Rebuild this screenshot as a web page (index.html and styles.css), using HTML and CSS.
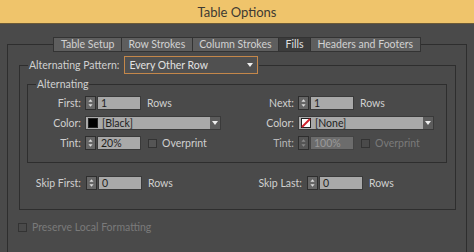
FILE: index.html
```html
<!DOCTYPE html>
<html lang="en">
<head>
    <meta charset="UTF-8">
    <meta name="viewport" content="width=device-width, initial-scale=1.0">
    <title>Table Options</title>
    <link rel="stylesheet" href="styles.css">
</head>
<body>
    <div class="titlebar">Table Options</div>

    <div class="panel">
        <div class="tabs">
            <span class="tab">Table Setup</span>
            <span class="tab">Row Strokes</span>
            <span class="tab">Column Strokes</span>
            <span class="tab active">Fills</span>
            <span class="tab">Headers and Footers</span>
        </div>

        <fieldset class="group pattern">
            <legend>
                <span class="legend-label">Alternating Pattern:</span>
                <span class="select">Every Other Row<span class="caret"></span></span>
            </legend>

            <fieldset class="group alternating">
                <legend>Alternating</legend>
                <div class="row">
                    <div class="cell first-col">
                        <span class="label">First:</span>
                        <svg class="spin" viewBox="0 0 11 14"><path d="M3 5.5 L5.5 2.5 L8 5.5Z"/><path d="M3 8.5 L5.5 11.5 L8 8.5Z"/></svg>
                        <span class="num">1</span>
                        <span class="unit">Rows</span>
                    </div>
                    <div class="cell">
                        <span class="label">Next:</span>
                        <svg class="spin" viewBox="0 0 11 14"><path d="M3 5.5 L5.5 2.5 L8 5.5Z"/><path d="M3 8.5 L5.5 11.5 L8 8.5Z"/></svg>
                        <span class="num">1</span>
                        <span class="unit">Rows</span>
                    </div>
                </div>
                <div class="row">
                    <div class="cell first-col">
                        <span class="label">Color:</span>
                        <span class="color-select">
                            <span class="swatch black"></span>
                            <span class="color-name">[Black]</span>
                            <span class="drop"></span>
                        </span>
                    </div>
                    <div class="cell">
                        <span class="label">Color:</span>
                        <span class="color-select">
                            <svg class="swatch" viewBox="0 0 10 10"><rect x="0.5" y="0.5" width="9" height="9" fill="#fff" stroke="#222"/><path d="M1 9 L9 1" stroke="#d0202a" stroke-width="2"/></svg>
                            <span class="color-name">[None]</span>
                            <span class="drop"></span>
                        </span>
                    </div>
                </div>
                <div class="row">
                    <div class="cell first-col">
                        <span class="label">Tint:</span>
                        <svg class="spin" viewBox="0 0 11 14"><path d="M3 5.5 L5.5 2.5 L8 5.5Z"/><path d="M3 8.5 L5.5 11.5 L8 8.5Z"/></svg>
                        <span class="num">20%</span>
                        <span class="check"></span>
                        <span class="check-label">Overprint</span>
                    </div>
                    <div class="cell disabled">
                        <span class="label">Tint:</span>
                        <svg class="spin" viewBox="0 0 11 14"><path d="M3 5.5 L5.5 2.5 L8 5.5Z"/><path d="M3 8.5 L5.5 11.5 L8 8.5Z"/></svg>
                        <span class="num">100%</span>
                        <span class="check"></span>
                        <span class="check-label">Overprint</span>
                    </div>
                </div>
            </fieldset>

            <div class="row skip">
                <div class="cell first-col">
                    <span class="label">Skip First:</span>
                    <svg class="spin" viewBox="0 0 11 14"><path d="M3 5.5 L5.5 2.5 L8 5.5Z"/><path d="M3 8.5 L5.5 11.5 L8 8.5Z"/></svg>
                    <span class="num">0</span>
                    <span class="unit">Rows</span>
                </div>
                <div class="cell">
                    <span class="label">Skip Last:</span>
                    <svg class="spin" viewBox="0 0 11 14"><path d="M3 5.5 L5.5 2.5 L8 5.5Z"/><path d="M3 8.5 L5.5 11.5 L8 8.5Z"/></svg>
                    <span class="num">0</span>
                    <span class="unit">Rows</span>
                </div>
            </div>
        </fieldset>

        <div class="preserve disabled">
            <span class="check"></span>
            <span class="check-label">Preserve Local Formatting</span>
        </div>
    </div>
</body>
</html>
```

FILE: styles.css
```css
body {
    font-family: Lato, "Noto Sans", sans-serif;
    font-size: 10.5px;
    margin: 0;
    padding: 0;
    height: 252px;
    overflow: hidden;
    background-color: #4a4a4a;
    color: #d0d0d0;
}
.titlebar {
    height: 23px;
    line-height: 24px;
    background-color: #efc46b;
    border-bottom: 1px solid #6b5a38;
    color: #3e3a32;
    font-size: 13px;
    text-align: center;
}

/* main frame around the tab content */
.panel {
    margin: 20px 7px 0;
    height: 207px;
    border: 1px solid #2e2e2e;
    border-bottom: none;
}
.tabs {
    display: flex;
    justify-content: center;
    margin-top: -8px;
    height: 15px;
}
.tab {
    padding: 0 6.5px;
    line-height: 13px;
    background-color: #5e5e5e;
    border: 1px solid #333;
    border-left: none;
    color: #d2d2d2;
}
.tab:first-child {
    border-left: 1px solid #333;
}
.tab.active {
    background-color: #3c3c3c;
    color: #e0e0e0;
}

/* group boxes */
.group {
    border: 1px solid #2e2e2e;
    margin: 0;
    padding: 0 8px 0 7px;
}
.group legend {
    padding: 0 1px;
    margin-left: 1px;
}
.pattern {
    margin: 4px 10px 0 11px;
    padding-bottom: 16px;
}
.pattern legend {
    display: flex;
    align-items: center;
    height: 18px;
}
.legend-label {
    margin-right: 5px;
}
.select {
    position: relative;
    width: 128px;
    height: 16px;
    line-height: 16px;
    padding-left: 4px;
    border: 1px solid #c4874a;
    background-color: #505050;
    color: #e2e2e2;
}
.caret {
    position: absolute;
    right: 4px;
    top: 6px;
    border-left: 3px solid transparent;
    border-right: 3px solid transparent;
    border-top: 4px solid #eee;
}
.alternating {
    margin-top: 1px;
    padding-bottom: 9px;
}
.alternating legend {
    line-height: 14px;
    margin-left: 1px;
}

/* rows of controls */
.row {
    display: flex;
    align-items: center;
    height: 20px;
}
.cell {
    display: flex;
    align-items: center;
}
.first-col {
    width: 205px;
}
.label {
    width: 46px;
    margin-right: 4px;
    text-align: right;
}
.cell + .cell .label {
    width: 54px;
}
.skip {
    margin-top: 10px;
}
.skip .first-col {
    width: 213px;
}
.skip .label {
    width: 54px;
    margin-right: 5px;
}
.skip .cell + .cell .label {
    width: 62px;
}
.spin {
    width: 11px;
    height: 14px;
    background-color: #666;
    box-sizing: border-box;
    border: 1px solid #2e2e2e;
    fill: #ddd;
    margin-right: 1px;
}
.num {
    width: 39px;
    height: 12px;
    line-height: 12px;
    padding-left: 3px;
    background-color: #a9a9a9;
    border: 1px solid #3a3a3a;
    color: #1e1e1e;
}
.unit {
    margin-left: 6px;
}
.color-select {
    position: relative;
    display: flex;
    align-items: center;
    width: 134px;
    height: 12px;
    background-color: #a9a9a9;
    border: 1px solid #3a3a3a;
    color: #1e1e1e;
}
.swatch {
    width: 10px;
    height: 10px;
    margin: 0 4px 0 2px;
}
.swatch.black {
    background-color: #000;
    box-sizing: border-box;
    border: 1px solid #222;
}
.drop {
    position: absolute;
    right: 0;
    top: 0;
    width: 10px;
    height: 12px;
    background-color: #5c5c5c;
}
.drop::after {
    content: "";
    position: absolute;
    left: 2px;
    top: 4px;
    border-left: 3px solid transparent;
    border-right: 3px solid transparent;
    border-top: 4px solid #eee;
}
.check {
    width: 7px;
    height: 7px;
    margin-left: 7px;
    margin-right: 5px;
    background-color: #555;
    border: 1px solid #333;
}

/* disabled controls */
.disabled {
    color: #7a7a7a;
}
.disabled .label {
    color: #b8b8b8;
}
.disabled .spin {
    background-color: #555;
    fill: #888;
}
.disabled .num {
    background-color: #6c6c6c;
    color: #9a9a9a;
    border-color: #444;
}
.disabled .check {
    background-color: #4a4a4a;
}

.preserve {
    display: flex;
    align-items: center;
    height: 14px;
    margin: 10px 0 0 10px;
}
.preserve .check {
    margin-left: 0;
}
```
